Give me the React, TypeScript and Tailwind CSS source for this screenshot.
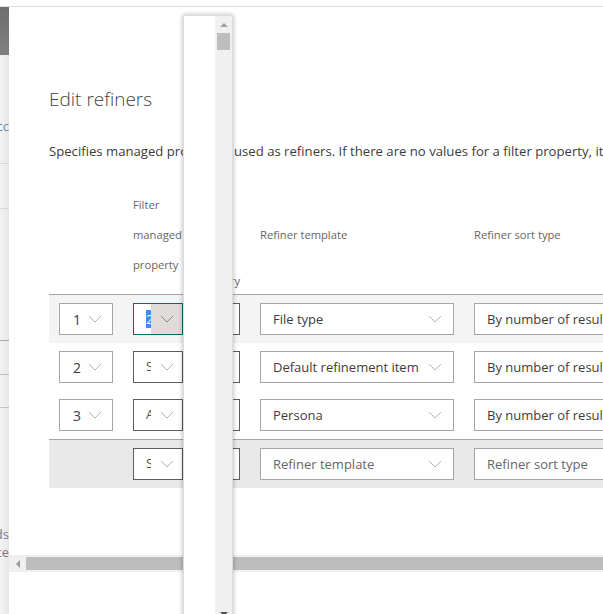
import React from "react";

const font = { fontFamily: '"Open Sans", "Noto Sans", sans-serif' };

function Chevron({ dark }: { dark?: boolean }) {
  return (
    <svg width="14" height="8" viewBox="0 0 14 8" fill="none" className="shrink-0">
      <path d="M1 1L7 7L13 1" stroke={dark ? "#8a8886" : "#b0b0b0"} strokeWidth="1" />
    </svg>
  );
}

function Select({ text, placeholder }: { text: string; placeholder?: boolean }) {
  return (
    <div className="w-[194px] h-[32px] shrink-0 flex items-center bg-white border border-[#a6a6a6] pl-[12px] pr-[11px]">
      <span className={`flex-1 pt-[2px] whitespace-nowrap overflow-hidden text-[13px] ${placeholder ? "text-[#666666]" : "text-[#3c3c3c]"}`}>
        {text}
      </span>
      <Chevron />
    </div>
  );
}

function Row({
  order,
  filter,
  focused,
  template,
  sort,
  placeholder,
}: {
  order?: string;
  filter: string;
  focused?: boolean;
  template: string;
  sort: string;
  placeholder?: boolean;
}) {
  return (
    <div className="flex items-center gap-[20px] pl-[10px] h-full">
      {order ? (
        <div className="w-[54px] h-[32px] shrink-0 flex items-center bg-white border border-[#a6a6a6] pl-[13px] pr-[10px] gap-[7px]">
          <span className="flex-1 text-[14px] text-[#3c3c3c]">{order}</span>
          <Chevron />
        </div>
      ) : (
        <div className="w-[54px] shrink-0" />
      )}
      {focused ? (
        <div className="w-[50px] h-[32px] shrink-0 flex items-stretch bg-white border border-[#0b6a6a]">
          <div className="w-[12px] shrink-0" />
          <div className="w-[5px] shrink-0 flex items-center overflow-hidden">
            <span className="block w-[5px] h-[18px] bg-[#3d8fef] text-white text-[13px] leading-[18px]">2</span>
          </div>
          <div className="flex-1 bg-[#dedcda] flex items-center justify-center">
            <Chevron dark />
          </div>
        </div>
      ) : (
        <div className="w-[50px] h-[32px] shrink-0 flex items-center bg-white border border-[#605e5c] pl-[12px]">
          <span className="w-[5px] overflow-hidden text-[13px] text-[#555555]">{filter}</span>
          <div className="flex-1 flex justify-center">
            <Chevron />
          </div>
        </div>
      )}
      <div className="w-[37px] h-[32px] shrink-0 bg-white border border-[#605e5c]" />
      <Select text={template} placeholder={placeholder} />
      <Select text={sort} placeholder={placeholder} />
    </div>
  );
}

export default function App() {
  return (
    <div className="relative w-[603px] h-[614px] overflow-hidden bg-white flex flex-col" style={font}>
      <div className="h-[7px] shrink-0 border-b border-[#dcdcdc]" />

      <div className="flex flex-1 min-h-0">
        {/* page behind the panel */}
        <div className="w-[9px] shrink-0 overflow-hidden flex flex-col bg-gradient-to-r from-[#f4f4f4] to-[#e6e6e6]">
          <div className="h-[48px] shrink-0 bg-gradient-to-b from-[#6e6e6e] to-[#808080]" />
          <div className="h-[108px] shrink-0 flex justify-end pt-[62px]">
            <span className="text-[13px] leading-[18px] text-[#5b8fb5] whitespace-nowrap">cc</span>
          </div>
          <div className="h-[45px] shrink-0 border-t border-[#d6d6d6]" />
          <div className="h-[132px] shrink-0 border-t border-[#d6d6d6]" />
          <div className="h-[34px] shrink-0 border-t border-[#a9a9a9]" />
          <div className="h-[33px] shrink-0 border-t border-[#bdbdbd]" />
          <div className="h-[118px] shrink-0 border-t border-[#c4c4c4]" />
          <div className="flex justify-end text-[13px] leading-[18px] text-[#7a7a90]">ds</div>
          <div className="flex justify-end text-[13px] leading-[18px] text-[#8a6f7a]">te</div>
        </div>

        {/* panel */}
        <div className="flex-1 min-w-0 flex flex-col overflow-hidden bg-white">
          <div className="h-[548px] shrink-0 pl-[40px] overflow-hidden">
            <h1 className="mt-[78px] text-[19px] leading-[28px] font-light text-[#444444]">Edit refiners</h1>
            <p className="mt-[28px] text-[13.15px] leading-[20px] text-[#3c3c3c] whitespace-nowrap">
              Specifies managed properties used as refiners. If there are no values for a filter property, it will not be shown.
            </p>

            <div className="mt-[15px] h-[118px] w-[600px] text-[11.2px] leading-[30px] text-[#666666]">
              <div className="flex items-start gap-[20px] pl-[10px]">
                <div className="w-[54px] shrink-0" />
                <div className="w-[50px] shrink-0 pt-[14px]">
                  <div>Filter</div>
                  <div>managed</div>
                  <div>property</div>
                </div>
                <div className="w-[37px] shrink-0 pt-[90px] flex justify-end whitespace-nowrap">Category</div>
                <div className="w-[194px] shrink-0 pt-[44px]">Refiner template</div>
                <div className="w-[194px] shrink-0 pt-[44px]">Refiner sort type</div>
              </div>
            </div>

            <div className="h-[49px] border-t border-[#a6a6a6] bg-[#f4f4f4]">
              <Row order="1" filter="2" focused template="File type" sort="By number of results" />
            </div>
            <div className="h-[48px]">
              <Row order="2" filter="S" template="Default refinement item" sort="By number of results" />
            </div>
            <div className="h-[48px]">
              <Row order="3" filter="A" template="Persona" sort="By number of results" />
            </div>
            <div className="h-[49px] border-t border-[#a6a6a6] bg-[#e9e9e9]">
              <Row filter="S" template="Refiner template" sort="Refiner sort type" placeholder />
            </div>
          </div>

          {/* horizontal scrollbar */}
          <div className="h-[17px] shrink-0 bg-[#f0f0f0] flex items-center">
            <div className="w-[17px] shrink-0 flex justify-center">
              <div className="w-0 h-0 border-y-[4px] border-y-transparent border-r-[4px] border-r-[#999999]" />
            </div>
            <div className="flex-1 h-[13px] bg-[#bdbdbd]" />
          </div>
        </div>
      </div>

      {/* open dropdown list, over the table */}
      <div className="absolute left-[183px] top-[15px] w-[50px] h-[640px] flex bg-white border border-[#dcdcdc] shadow-[0_0_5px_rgba(0,0,0,0.3)]">
        <div className="flex-1" />
        <div className="w-[17px] shrink-0 bg-[#f0f0f0] flex flex-col items-center">
          <div className="mt-[7px] w-0 h-0 border-x-[4px] border-x-transparent border-b-[4px] border-b-[#a0a0a0]" />
          <div className="mt-[6px] w-[13px] h-[17px] bg-[#bdbdbd]" />
          <div className="mt-[562px] w-0 h-0 border-x-[4px] border-x-transparent border-t-[4px] border-t-[#505050]" />
        </div>
      </div>
    </div>
  );
}
